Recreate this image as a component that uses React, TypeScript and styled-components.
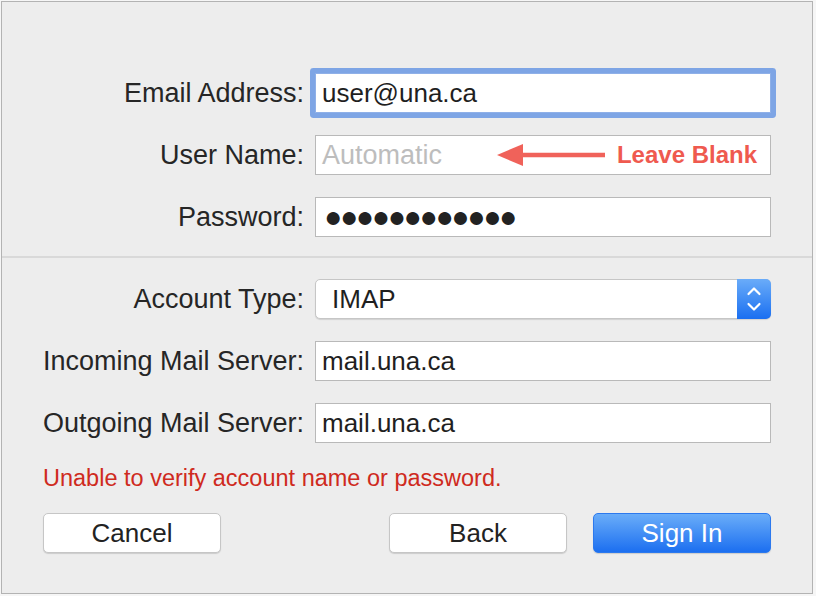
import styled, { createGlobalStyle } from "styled-components";

const GlobalStyle = createGlobalStyle`
  html, body {
    margin: 0;
    padding: 0;
  }
  body {
    background: #f6f6f6;
    font-family: "Liberation Sans", Arial, sans-serif;
  }
  * {
    box-sizing: border-box;
  }
`;

const App = () => {
  return (
    <>
      <GlobalStyle />
      <Window>
        <Section $top={71} $bottom={19}>
          <FormGrid>
            <Label>Email Address:</Label>
            <Field $focused>user@una.ca</Field>

            <Label>User Name:</Label>
            <Field>
              <Placeholder>Automatic</Placeholder>
              <Annotation>
                <svg width="108" height="26" viewBox="0 0 108 26">
                  <polygon points="0,13 26,2 26,24" fill="#f0625a" />
                  <rect x="24" y="10.75" width="84" height="4.5" fill="#f0625a" />
                </svg>
                <Note>Leave Blank</Note>
              </Annotation>
            </Field>

            <Label>Password:</Label>
            <Field>
              <Dots>●●●●●●●●●●●●</Dots>
            </Field>
          </FormGrid>
        </Section>

        <Divider />

        <Section $top={21} $bottom={0}>
          <FormGrid>
            <Label>Account Type:</Label>
            <Select>
              <SelectValue>IMAP</SelectValue>
              <Stepper>
                <svg width="16" height="30" viewBox="0 0 16 30">
                  <polyline points="2.5,10 8,4.5 13.5,10" fill="none" stroke="#fff" strokeWidth="2.2" strokeLinecap="round" strokeLinejoin="round" />
                  <polyline points="2.5,20 8,25.5 13.5,20" fill="none" stroke="#fff" strokeWidth="2.2" strokeLinecap="round" strokeLinejoin="round" />
                </svg>
              </Stepper>
            </Select>

            <Label>Incoming Mail Server:</Label>
            <Field>mail.una.ca</Field>

            <Label>Outgoing Mail Server:</Label>
            <Field>mail.una.ca</Field>
          </FormGrid>

          <ErrorText>Unable to verify account name or password.</ErrorText>

          <ButtonRow>
            <Button>Cancel</Button>
            <ButtonGroup>
              <Button>Back</Button>
              <Button $primary>Sign In</Button>
            </ButtonGroup>
          </ButtonRow>
        </Section>
      </Window>
    </>
  );
};

export default App;

const Window = styled.div`
  margin: 1px 0 0 1px;
  width: 812px;
  height: 593px;
  border: 1px solid #b3b3b3;
  background: #ededed;
  display: flex;
  flex-direction: column;
`;

const Section = styled.div<{ $top: number; $bottom: number }>`
  padding: ${(p) => p.$top}px 41px ${(p) => p.$bottom}px 41px;
`;

const FormGrid = styled.div`
  display: grid;
  grid-template-columns: 261px 456px;
  column-gap: 11px;
  row-gap: 22px;
  align-items: center;
`;

const Label = styled.label`
  text-align: right;
  font-size: 27px;
  color: #262626;
  white-space: nowrap;
`;

const Field = styled.div<{ $focused?: boolean }>`
  position: relative;
  height: 40px;
  display: flex;
  align-items: center;
  padding: 0 6px;
  background: #fff;
  border: 1px solid #b9b9b9;
  font-size: 26px;
  color: #1f1f1f;
  ${(p) =>
    p.$focused &&
    `
    border-color: #8fb0e8;
    border-radius: 1px;
    box-shadow: 0 0 0 5px #7ea5e5;
  `}
`;

const Placeholder = styled.span`
  font-size: 27px;
  color: #bdbdbd;
`;

const Annotation = styled.div`
  position: absolute;
  top: 0;
  bottom: 0;
  right: 13px;
  display: flex;
  align-items: center;
  gap: 12px;
`;

const Note = styled.span`
  font-size: 24px;
  font-weight: 700;
  color: #ef5a4f;
`;

const Dots = styled.span`
  padding-left: 2px;
  font-size: 30px;
  letter-spacing: -2.2px;
  color: #222;
`;

const Divider = styled.div`
  height: 2px;
  background: #d9d9d9;
`;

const Select = styled.div`
  height: 40px;
  display: flex;
  background: #fff;
  border: 1px solid #c6c6c6;
  border-radius: 5px;
  box-shadow: 0 1px 1px rgba(0, 0, 0, 0.12);
`;

const SelectValue = styled.div`
  flex: 1;
  display: flex;
  align-items: center;
  padding-left: 16px;
  font-size: 26px;
  color: #1f1f1f;
`;

const Stepper = styled.div`
  width: 34px;
  margin: -1px -1px -1px 0;
  display: flex;
  align-items: center;
  justify-content: center;
  border-radius: 0 5px 5px 0;
  background: linear-gradient(#6aacf9, #1a6ff1);
`;

const ErrorText = styled.div`
  margin-top: 21px;
  height: 28px;
  line-height: 28px;
  font-size: 23.5px;
  color: #cf2a20;
`;

const ButtonRow = styled.div`
  margin-top: 21px;
  display: flex;
  justify-content: space-between;
`;

const ButtonGroup = styled.div`
  display: flex;
  gap: 26px;
`;

const Button = styled.button<{ $primary?: boolean }>`
  width: 178px;
  height: 40px;
  padding: 0;
  border-radius: 5px;
  font-family: "Liberation Sans", Arial, sans-serif;
  font-size: 26px;
  border: 1px solid #c6c6c6;
  background: #fff;
  color: #222;
  box-shadow: 0 1px 1px rgba(0, 0, 0, 0.14);
  ${(p) =>
    p.$primary &&
    `
    border-color: #2c79ee;
    background: linear-gradient(#6aadf9, #1c6ff0);
    color: #fff;
  `}
`;
